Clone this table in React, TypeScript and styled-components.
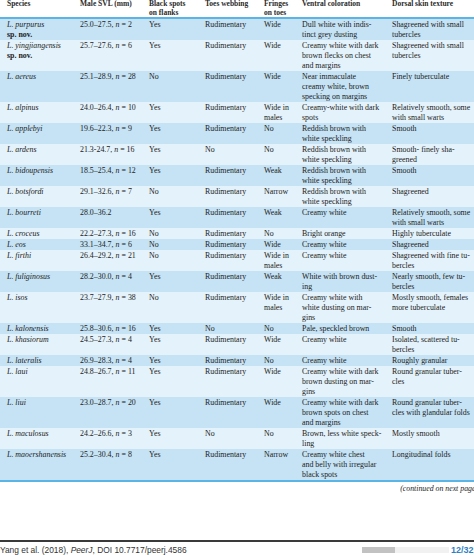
import React from 'react';
import styled, {createGlobalStyle} from 'styled-components';

const GlobalStyle = createGlobalStyle`
  html, body {
    margin: 0;
    padding: 0;
    background: #ffffff;
  }
  body {
    width: 474px;
    height: 555px;
    overflow: hidden;
  }
`;

const Page = styled.div`
  width: 478px;
  height: 555px;
  display: flex;
  flex-direction: column;
  font-family: "Liberation Serif", "Times New Roman", serif;
  color: #222222;
`;

const Table = styled.table`
  width: 478px;
  table-layout: fixed;
  border-collapse: collapse;
  font-size: 7.9px;
  line-height: 10px;
  border-bottom: 2px solid #5ab4e5;
`;

const HeadRow = styled.tr`
  border-bottom: 2px solid #5ab4e5;
`;

const Th = styled.th`
  padding: 0;
  text-align: left;
  vertical-align: top;
  font-weight: bold;
  font-size: 7.5px;
  line-height: 8.6px;
  white-space: nowrap;
  color: #2a2a2a;

  &:first-child {
    padding-left: 7px;
  }
`;

const Row = styled.tr<{ $dark: boolean }>`
  background: ${p => (p.$dark ? '#c5e3f5' : '#e4f2fb')};
`;

const Td = styled.td`
  padding: 1px 0 0;
  vertical-align: top;
  white-space: nowrap;

  &:first-child {
    padding-left: 7px;
  }
`;

const Sp = styled.i``;
const Nov = styled.b``;

const Continued = styled.div`
  padding-top: 2px;
  text-align: right;
  font-style: italic;
  font-size: 7.8px;
  line-height: 10px;
`;

const Footer = styled.div`
  margin-top: auto;
  border-top: 2px solid #3a3a3a;
  padding-top: 3px;
  height: 10px;
  display: grid;
  grid-template-columns: 362px 87px auto;
  align-items: center;
  font-family: "Liberation Sans", Arial, sans-serif;
`;

const Cite = styled.div`
  font-size: 8.4px;
  line-height: 10px;
  color: #333333;
  white-space: nowrap;
`;

const Track = styled.div`
  height: 6px;
  background: #f1f1f1;
  display: flex;
`;

const Fill = styled.div`
  height: 100%;
  background: #c2c2c2;
`;

const PageNo = styled.div`
  padding-left: 2px;
  font-size: 9px;
  font-weight: bold;
  line-height: 10px;
  color: #2f7fc4;
  white-space: nowrap;
`;

interface Entry {
  species: string
  nov?: boolean
  svl: string
  n?: number
  spots: string
  webbing: string
  fringes: string[]
  ventral: string[]
  dorsal: string[]
}

const rows: Entry[] = [
  {species: 'L. purpurus', nov: true, svl: '25.0–27.5', n: 2, spots: 'Yes', webbing: 'Rudimentary', fringes: ['Wide'], ventral: ['Dull white with indis-', 'tinct grey dusting'], dorsal: ['Shagreened with small', 'tubercles']},
  {species: 'L. yingjiangensis', nov: true, svl: '25.7–27.6', n: 6, spots: 'Yes', webbing: 'Rudimentary', fringes: ['Wide'], ventral: ['Creamy white with dark', 'brown flecks on chest', 'and margins'], dorsal: ['Shagreened with small', 'tubercles']},
  {species: 'L. aereus', svl: '25.1–28.9', n: 28, spots: 'No', webbing: 'Rudimentary', fringes: ['Wide'], ventral: ['Near immaculate', 'creamy white, brown', 'specking on margins'], dorsal: ['Finely tuberculate']},
  {species: 'L. alpinus', svl: '24.0–26.4', n: 10, spots: 'Yes', webbing: 'Rudimentary', fringes: ['Wide in', 'males'], ventral: ['Creamy-white with dark', 'spots'], dorsal: ['Relatively smooth, some', 'with small warts']},
  {species: 'L. applebyi', svl: '19.6–22.3', n: 9, spots: 'Yes', webbing: 'Rudimentary', fringes: ['No'], ventral: ['Reddish brown with', 'white speckling'], dorsal: ['Smooth']},
  {species: 'L. ardens', svl: '21.3-24.7', n: 16, spots: 'Yes', webbing: 'No', fringes: ['No'], ventral: ['Reddish brown with', 'white speckling'], dorsal: ['Smooth- finely sha-', 'greened']},
  {species: 'L. bidoupensis', svl: '18.5–25.4', n: 12, spots: 'Yes', webbing: 'Rudimentary', fringes: ['Weak'], ventral: ['Reddish brown with', 'white speckling'], dorsal: ['Smooth']},
  {species: 'L. botsfordi', svl: '29.1–32.6', n: 7, spots: 'No', webbing: 'Rudimentary', fringes: ['Narrow'], ventral: ['Reddish brown with', 'white speckling'], dorsal: ['Shagreened']},
  {species: 'L. bourreti', svl: '28.0–36.2', spots: 'Yes', webbing: 'Rudimentary', fringes: ['Weak'], ventral: ['Creamy white'], dorsal: ['Relatively smooth, some', 'with small warts']},
  {species: 'L. croceus', svl: '22.2–27.3', n: 16, spots: 'No', webbing: 'Rudimentary', fringes: ['No'], ventral: ['Bright orange'], dorsal: ['Highly tuberculate']},
  {species: 'L. eos', svl: '33.1–34.7', n: 6, spots: 'No', webbing: 'Rudimentary', fringes: ['Wide'], ventral: ['Creamy white'], dorsal: ['Shagreened']},
  {species: 'L. firthi', svl: '26.4–29.2', n: 21, spots: 'No', webbing: 'Rudimentary', fringes: ['Wide in', 'males'], ventral: ['Creamy white'], dorsal: ['Shagreened with fine tu-', 'bercles']},
  {species: 'L. fuliginosus', svl: '28.2–30.0', n: 4, spots: 'Yes', webbing: 'Rudimentary', fringes: ['Weak'], ventral: ['White with brown dust-', 'ing'], dorsal: ['Nearly smooth, few tu-', 'bercles']},
  {species: 'L. isos', svl: '23.7–27.9', n: 38, spots: 'No', webbing: 'Rudimentary', fringes: ['Wide in', 'males'], ventral: ['Creamy white with', 'white dusting on mar-', 'gins'], dorsal: ['Mostly smooth, females', 'more tuberculate']},
  {species: 'L. kalonensis', svl: '25.8–30.6', n: 16, spots: 'Yes', webbing: 'No', fringes: ['No'], ventral: ['Pale, speckled brown'], dorsal: ['Smooth']},
  {species: 'L. khasiorum', svl: '24.5–27.3', n: 4, spots: 'Yes', webbing: 'Rudimentary', fringes: ['Wide'], ventral: ['Creamy white'], dorsal: ['Isolated, scattered tu-', 'bercles']},
  {species: 'L. lateralis', svl: '26.9–28.3', n: 4, spots: 'Yes', webbing: 'Rudimentary', fringes: ['No'], ventral: ['Creamy white'], dorsal: ['Roughly granular']},
  {species: 'L. laui', svl: '24.8–26.7', n: 11, spots: 'Yes', webbing: 'Rudimentary', fringes: ['Wide'], ventral: ['Creamy white with dark', 'brown dusting on mar-', 'gins'], dorsal: ['Round granular tuber-', 'cles']},
  {species: 'L. liui', svl: '23.0–28.7', n: 20, spots: 'Yes', webbing: 'Rudimentary', fringes: ['Wide'], ventral: ['Creamy white with dark', 'brown spots on chest', 'and margins'], dorsal: ['Round granular tuber-', 'cles with glandular folds']},
  {species: 'L. maculosus', svl: '24.2–26.6', n: 3, spots: 'Yes', webbing: 'No', fringes: ['No'], ventral: ['Brown, less white speck-', 'ling'], dorsal: ['Mostly smooth']},
  {species: 'L. maoershanensis', svl: '25.2–30.4', n: 8, spots: 'Yes', webbing: 'Rudimentary', fringes: ['Narrow'], ventral: ['Creamy white chest', 'and belly with irregular', 'black spots'], dorsal: ['Longitudinal folds']},
];

const Lines = ({items}: { items: string[] }) => (
  <>
    {items.map((t, i) => (
      <React.Fragment key={i}>
        {i > 0 && <br/>}
        {t}
      </React.Fragment>
    ))}
  </>
);

const page = 12;
const pages = 32;

export default function App() {
  return (
    <Page>
      <GlobalStyle/>
      <Table>
        <colgroup>
          <col style={{width: 80}}/>
          <col style={{width: 69}}/>
          <col style={{width: 56}}/>
          <col style={{width: 59}}/>
          <col style={{width: 38}}/>
          <col style={{width: 90}}/>
          <col style={{width: 86}}/>
        </colgroup>
        <thead>
          <HeadRow>
            <Th>Species</Th>
            <Th>Male SVL (mm)</Th>
            <Th>Black spots<br/>on flanks</Th>
            <Th>Toes webbing</Th>
            <Th>Fringes<br/>on toes</Th>
            <Th>Ventral coloration</Th>
            <Th>Dorsal skin texture</Th>
          </HeadRow>
        </thead>
        <tbody>
          {rows.map((r, i) => (
            <Row key={r.species} $dark={i % 2 === 0}>
              <Td>
                <Sp>{r.species}</Sp>
                {r.nov && <><br/><Nov>sp. nov.</Nov></>}
              </Td>
              <Td>
                {r.svl}
                {r.n !== undefined && <>, <i>n</i> = {r.n}</>}
              </Td>
              <Td>{r.spots}</Td>
              <Td>{r.webbing}</Td>
              <Td><Lines items={r.fringes}/></Td>
              <Td><Lines items={r.ventral}/></Td>
              <Td><Lines items={r.dorsal}/></Td>
            </Row>
          ))}
        </tbody>
      </Table>
      <Continued>(continued on next page)</Continued>
      <Footer>
        <Cite>Yang et al. (2018), <i>PeerJ</i>, DOI 10.7717/peerj.4586</Cite>
        <Track>
          <Fill style={{width: `${(page / pages) * 100}%`}}/>
        </Track>
        <PageNo>{page}/{pages}</PageNo>
      </Footer>
    </Page>
  );
}
